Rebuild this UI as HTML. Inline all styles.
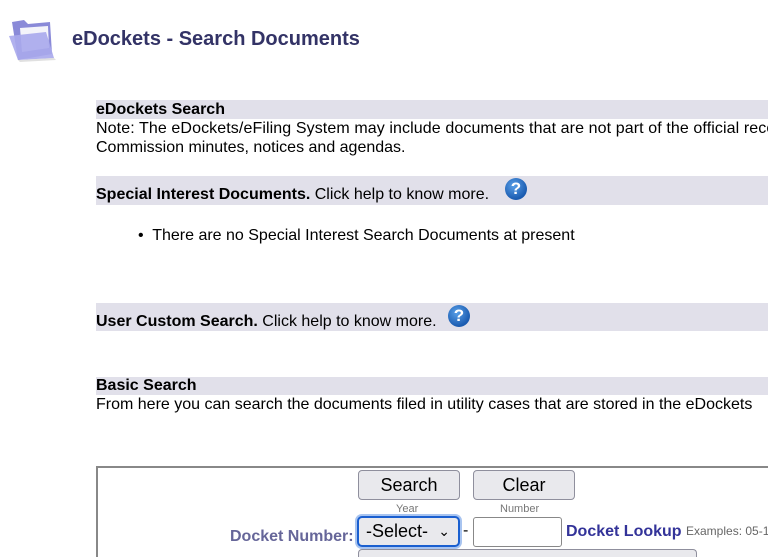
<!DOCTYPE html>
<html><head><meta charset="utf-8"><style>
html,body{margin:0;width:768px;height:557px;overflow:hidden}
body{background:#fff;font-family:"Liberation Sans",Arial,sans-serif;font-size:16px;color:#000}
#w{position:relative;width:768px;height:557px;overflow:hidden}
.a{position:absolute;white-space:nowrap}
.bar{position:absolute;left:96px;right:0;background:#e1e0ea}
.q{position:absolute;width:22px;height:22px;border-radius:50%;background:radial-gradient(circle at 40% 35%,#5aa0e8,#1a5bb0 70%);color:#fff;font-weight:bold;font-size:17px;text-align:center;line-height:22px}
.btn{position:absolute;border:1px solid #8f8f9d;border-radius:4px;background:#e9e9ed;font-size:18px;text-align:center;box-sizing:border-box}
</style></head><body><div id="w">
<svg class="a" style="left:6px;top:14px" width="56" height="48" viewBox="0 0 56 48">
<path d="M6 8 L18 6 L22 10 L44 8 L46 40 L12 46 Z" fill="#8a8ad8"/>
<path d="M14 14 L42 12 L43 34 L16 38 Z" fill="#f4f4fa"/>
<path d="M3 22 L40 18 L48 44 L12 46 Z" fill="#a8a8ec" opacity=".9"/>
<path d="M12 46 L48 44 L50 46 L14 48Z" fill="#ccc" opacity=".6"/>
</svg>
<div class="a" style="left:72px;top:28px;font-size:20px;font-weight:bold;color:#333366">eDockets - Search Documents</div>

<div class="bar" style="top:100px;height:19px"></div>
<div class="a" style="left:96px;top:101px;font-weight:bold">eDockets Search</div>
<div class="a" style="left:96px;top:120px;letter-spacing:0.1px">Note: The eDockets/eFiling System may include documents that are not part of the official record</div>
<div class="a" style="left:96px;top:139px">Commission minutes, notices and agendas.</div>

<div class="bar" style="top:176px;height:29px"></div>
<div class="a" style="left:96px;top:186px"><b>Special Interest Documents.</b> Click help to know more.</div>
<div class="q" style="left:505px;top:178px">?</div>
<div class="a" style="left:138px;top:227px">•&nbsp; There are no Special Interest Search Documents at present</div>

<div class="bar" style="top:303px;height:28px"></div>
<div class="a" style="left:96px;top:313px"><b>User Custom Search.</b> Click help to know more.</div>
<div class="q" style="left:448px;top:305px">?</div>

<div class="bar" style="top:377px;height:18px"></div>
<div class="a" style="left:96px;top:377px;font-weight:bold">Basic Search</div>
<div class="a" style="left:96px;top:396px">From here you can search the documents filed in utility cases that are stored in the eDockets</div>

<div style="position:absolute;left:96px;top:466px;width:672px;height:91px;border:2px solid #888;border-right:none;border-bottom:none;box-sizing:border-box"></div>
<div class="btn" style="left:358px;top:470px;width:102px;height:30px;line-height:28px">Search</div>
<div class="btn" style="left:473px;top:470px;width:102px;height:30px;line-height:28px">Clear</div>
<div class="a" style="left:396px;top:503px;font-size:11px;color:#777">Year</div>
<div class="a" style="left:500px;top:503px;font-size:11px;color:#777">Number</div>
<div class="a" style="left:230px;top:528px;font-size:16px;font-weight:bold;color:#666699">Docket Number:</div>
<div style="position:absolute;left:357px;top:516px;width:103px;height:31px;border:2px solid #1a5fd0;border-radius:5px;box-shadow:0 0 0 2px #a8c4f0;box-sizing:border-box;background:#e9e9ed;font-size:18px;line-height:27px;padding-left:7px">-Select-<span style="position:absolute;right:8px;top:0;font-size:14px">&#8964;</span></div>
<div class="a" style="left:463px;top:522px;font-size:16px">-</div>
<div style="position:absolute;left:473px;top:517px;width:89px;height:30px;border:1px solid #888;border-radius:3px;box-sizing:border-box"></div>
<div class="a" style="left:566px;top:523px;font-size:16px;font-weight:bold;color:#333399">Docket Lookup</div>
<div class="a" style="left:686px;top:524px;font-size:12px;color:#666">Examples: 05-1</div>
<div style="position:absolute;left:358px;top:549px;width:339px;height:8px;border:1px solid #8f8f9d;border-bottom:none;border-radius:4px 4px 0 0;background:#e9e9ed;box-sizing:border-box"></div>
</div></body></html>
